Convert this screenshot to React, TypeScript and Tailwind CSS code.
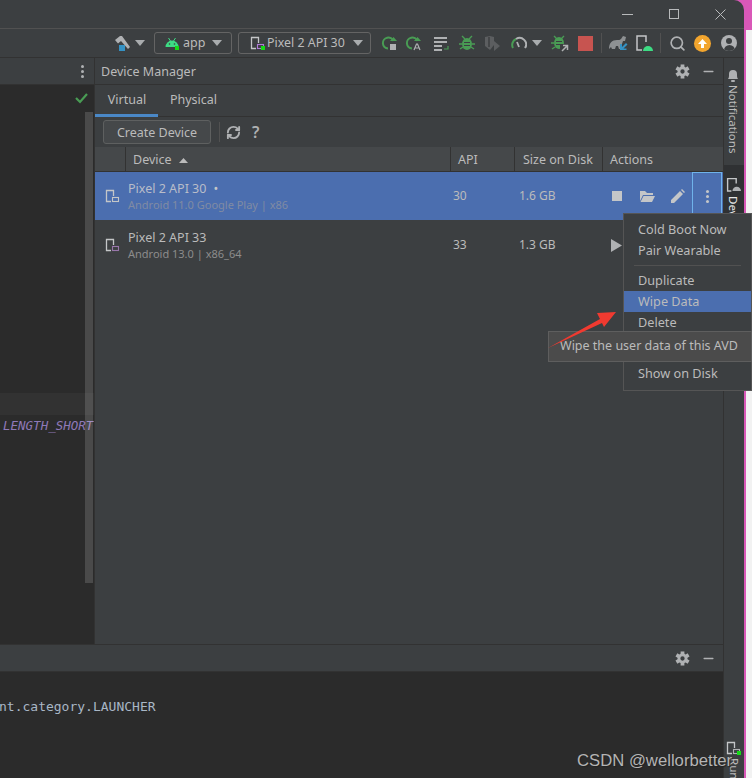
import React from "react";
import { Minus, Search, RefreshCw } from "lucide-react";

const UI = { fontFamily: '"Noto Sans", "Open Sans", sans-serif' };
const MONO = { fontFamily: '"DejaVu Sans Mono", "Liberation Mono", monospace' };

function Caret({ className = "" }: { className?: string }) {
  return (
    <svg width="10" height="6" viewBox="0 0 10 6" className={className}>
      <path d="M0 0h10L5 6z" fill="#a9acae" />
    </svg>
  );
}

function PhoneIcon({ accent = "#afb1b3", dot = false }: { accent?: string; dot?: boolean }) {
  return (
    <svg width="16" height="16" viewBox="0 0 16 16" fill="none" className="flex-none">
      <path d="M6 13.5H1.5V2.5h7V8" stroke="#c4c6c8" strokeWidth="1.3" />
      <rect x="7.5" y="9.5" width="6" height="4" stroke={accent} strokeWidth="1.1" />
      {dot && <rect x="11" y="11" width="4" height="4" fill="#16d916" />}
    </svg>
  );
}

function Android({ dot = false }: { dot?: boolean }) {
  return (
    <svg width="14" height="14" viewBox="0 0 14 14" className="flex-none">
      <path d="M0.5 11a6.500 6.500 0 0 1 13 0z" fill="#3ddc84" />
      <path d="M3.500 2l2 3M10.500 2l-2 3" stroke="#3ddc84" strokeWidth="1" />
      <circle cx="4.500" cy="8" r="0.8" fill="#3c3f41" />
      <circle cx="9.500" cy="8" r="0.8" fill="#3c3f41" />
      {dot && <rect x="10" y="10" width="4" height="4" fill="#16d916" />}
    </svg>
  );
}

function Gear() {
  const teeth = [0, 60, 120, 180, 240, 300];
  return (
    <svg width="15" height="15" viewBox="0 0 16 16" className="flex-none">
      {teeth.map((a) => (
        <rect key={a} x="6" y="0.5" width="4" height="4" fill="#afb1b3" transform={`rotate(${a} 8 8)`} />
      ))}
      <circle cx="8" cy="8" r="3.800" fill="none" stroke="#afb1b3" strokeWidth="3" />
    </svg>
  );
}

function PanelHeaderIcons() {
  return (
    <div className="flex items-center gap-[11px]">
      <Gear />
      <Minus size={15} color="#afb1b3" strokeWidth={2.2} />
    </div>
  );
}

function Toolbar() {
  return (
    <div className="h-[29px] flex items-center border-b border-[#323232] text-[#bbbbbb]">
      <div className="ml-[113px] w-[20px] flex justify-center">
        <svg width="18" height="18" viewBox="0 0 18 18">
          <path d="M1 6l5-4 2 0 8 11-2 2L7 7 4 9.500z" fill="#afb1b3" />
          <rect x="5" y="11" width="6" height="6" fill="#3592c4" />
        </svg>
      </div>
      <Caret className="ml-[2px]" />
      <div className="ml-[9px] w-[78px] h-[22px] rounded-[3px] border border-[#646464] flex items-center pl-[10px] gap-[4px] text-[12.500px]">
        <Android dot />
        <span>app</span>
        <Caret className="ml-[3px]" />
      </div>
      <div className="ml-[6px] w-[133px] h-[22px] rounded-[3px] border border-[#646464] flex items-center pl-[11px] gap-[1px] text-[12.400px]">
        <PhoneIcon accent="#b07cd8" dot />
        <span className="whitespace-nowrap">Pixel 2 API 30</span>
        <Caret className="ml-[7px]" />
      </div>
      <div className="ml-[8px] w-[20px] flex justify-center">
        <svg width="16" height="16" viewBox="0 0 16 16" fill="none">
          <path d="M7 13.5A5.5 5.5 0 1 1 12.5 6" stroke="#499c54" strokeWidth="2" />
          <path d="M9 6h7l-3.500-4z" fill="#499c54" />
          <rect x="9" y="9" width="6" height="6" fill="#afb1b3" />
        </svg>
      </div>
      <div className="ml-[4px] w-[20px] flex justify-center">
        <svg width="16" height="16" viewBox="0 0 16 16" fill="none">
          <path d="M7 13.500A5.500 5.500 0 1 1 12.500 6" stroke="#499c54" strokeWidth="2" />
          <path d="M9 6h7l-3.500-4z" fill="#499c54" />
          <path d="M9 15l2.500-6h1l2.500 6M10.500 13h3" stroke="#afb1b3" strokeWidth="1.2" />
        </svg>
      </div>
      <div className="ml-[8px] w-[20px] flex justify-center">
        <svg width="16" height="16" viewBox="0 0 16 16" fill="none">
          <path d="M1 3h13M1 7h13M1 11h8M1 15h8" stroke="#afb1b3" strokeWidth="1.8" />
          <path d="M15 11v3h-4" stroke="#499c54" strokeWidth="1.2" />
        </svg>
      </div>
      <div className="ml-[6px] w-[20px] flex justify-center">
        <svg width="16" height="16" viewBox="0 0 16 16" fill="none">
          <ellipse cx="8" cy="9" rx="5" ry="6" fill="#499c54" />
          <path d="M3 1l3 3M13 1l-3 3M0 9h3M13 9h3M1 14l3-2M15 14l-3-2" stroke="#499c54" strokeWidth="1.4" />
          <path d="M5 7.500h6M5 10.500h6" stroke="#3c3f41" strokeWidth="1.2" />
        </svg>
      </div>
      <div className="ml-[5px] w-[20px] flex justify-center">
        <svg width="16" height="16" viewBox="0 0 16 16">
          <path d="M1 2l5-1 4 1v8l-4 5-5-4z" fill="#5c5e60" />
          <path d="M10 6l6 5-6 5z" fill="#5c5e60" />
          <path d="M5 2v10" stroke="#3c3f41" strokeWidth="1.500" />
        </svg>
      </div>
      <div className="ml-[7px] w-[20px] flex justify-center">
        <svg width="16" height="16" viewBox="0 0 16 16" fill="none">
          <path d="M2 13A6.500 6.500 0 0 1 5 4" stroke="#499c54" strokeWidth="2" />
          <path d="M5 4A6.500 6.500 0 0 1 14 13" stroke="#afb1b3" strokeWidth="2" />
          <path d="M8 12L6 7" stroke="#afb1b3" strokeWidth="1.800" />
        </svg>
      </div>
      <Caret className="ml-[3px]" />
      <div className="ml-[8px] w-[20px] flex justify-center">
        <svg width="18" height="18" viewBox="0 0 18 18" fill="none">
          <ellipse cx="8" cy="9" rx="5" ry="6" fill="#499c54" />
          <path d="M3 2l3 3M13 2l-3 3M0 9h3M1 15l3-2" stroke="#499c54" strokeWidth="1.400" />
          <path d="M5 7.500h6M5 10.500h6" stroke="#3c3f41" strokeWidth="1.200" />
          <path d="M9 10h8v8H9z" fill="#3c3f41" />
          <path d="M11 17l5-5M12 11.500h4.500V16" stroke="#afb1b3" strokeWidth="1.500" />
        </svg>
      </div>
      <div className="ml-[5px] w-[20px] flex justify-center">
        <div className="w-[15px] h-[15px] bg-[#c75450]" />
      </div>
      <div className="ml-[6px] w-px h-[20px] bg-[#515151]" />
      <div className="ml-[6px] w-[20px] flex justify-center">
        <svg width="20" height="16" viewBox="0 0 20 16">
          <path d="M1 14c0-6 3-9 8-9 2 0 3 0 4-1l2-3 3 1-1 4h-2l-1 3v5h-3l-1-3-2 0-1 3H4l-1-2z" fill="#8e9193" />
          <path d="M12 15V9h2v3l4-4 1.500 1.500-4 4h3V15z" fill="#3592c4" />
        </svg>
      </div>
      <div className="ml-[6px] w-[20px] flex justify-center">
        <svg width="20" height="18" viewBox="0 0 20 18" fill="none">
          <path d="M8 16H3V2h9v6" stroke="#c4c6c8" strokeWidth="1.500" />
          <path d="M9 17a5 5 0 0 1 10 0z" fill="#3ddc84" />
        </svg>
      </div>
      <div className="ml-[6px] w-px h-[20px] bg-[#515151]" />
      <div className="ml-[7px] w-[18px] flex justify-center">
        <Search size={17} color="#afb1b3" strokeWidth={2.4} />
      </div>
      <div className="ml-[8px] w-[17px] h-[17px] rounded-full bg-[#f2a52e] flex items-center justify-center">
        <svg width="11" height="11" viewBox="0 0 11 11">
          <path d="M5.500 1L10 6H7v4H4V6H1z" fill="#ffffff" />
        </svg>
      </div>
      <div className="ml-[10px] w-[16px] h-[16px] rounded-full bg-[#afb1b3] relative overflow-hidden">
        <div className="mx-auto mt-[3px] w-[6px] h-[6px] rounded-full bg-[#3c3f41]" />
        <div className="mx-auto mt-[1px] w-[11px] h-[6px] rounded-t-full bg-[#3c3f41]" />
      </div>
    </div>
  );
}

function DeviceRow({
  selected,
  name,
  sub,
  api,
  size,
  children,
}: {
  selected?: boolean;
  name: React.ReactNode;
  sub: string;
  api: string;
  size: string;
  children: React.ReactNode;
}) {
  return (
    <div className={`h-[48px] flex items-center text-[12px] ${selected ? "bg-[#4b6eaf]" : ""}`}>
      <div className="w-[33px] pl-[10px] flex-none">
        <PhoneIcon accent={selected ? "#c4c6c8" : "#9876aa"} />
      </div>
      <div className="w-[325px] flex-none">
        <div className={`text-[12.500px] leading-[17px] ${selected ? "text-[#b9bdc9]" : "text-[#bbbbbb]"}`}>{name}</div>
        <div className={`text-[11px] leading-[16px] ${selected ? "text-[#808ba3]" : "text-[#8c8c8c]"}`}>{sub}</div>
      </div>
      <div className="w-[66px] flex-none text-[#bbbbbb]">{api}</div>
      <div className="w-[83px] flex-none text-[#bbbbbb]">{size}</div>
      <div className="flex-1 flex items-center h-full">{children}</div>
    </div>
  );
}

function MenuItem({ children, active }: { children: React.ReactNode; active?: boolean }) {
  return (
    <div className={`h-[21px] pl-[14px] flex items-center text-[12.700px] text-[#bbbbbb] ${active ? "bg-[#4b6eaf]" : ""}`}>
      {children}
    </div>
  );
}

function VerticalTabs() {
  return (
    <div className="w-[21px] flex-none border-l border-[#323232] flex flex-col items-center text-[11.500px] text-[#bbbbbb]">
      <div className="w-full h-[107px] flex flex-col items-center pt-[11px] pr-[2px]">
        <svg width="14" height="14" viewBox="0 0 14 14" className="flex-none">
          <path d="M2 10c1-1 1-3 1-5a4 4 0 0 1 8 0c0 2 0 4 1 5z" fill="#afb1b3" />
          <rect x="5" y="11" width="4" height="2" rx="1" fill="#afb1b3" />
        </svg>
        <span className="[writing-mode:vertical-rl] leading-[18px] whitespace-nowrap mt-[2px]">Notifications</span>
      </div>
      <div className="w-full h-[130px] bg-[#2f3133] flex flex-col items-center pt-[12px] pr-[2px] overflow-hidden">
        <svg width="15" height="15" viewBox="0 0 14 14" fill="none" className="flex-none">
          <path d="M5 13H1.500V1.500h8V6" stroke="#c4c6c8" strokeWidth="1.300" />
          <path d="M6 13a4 4 0 0 1 8 0z" fill="#afb1b3" />
        </svg>
        <span className="[writing-mode:vertical-rl] leading-[18px] whitespace-nowrap mt-[4px] text-[#e6e6e6]">Device Manager</span>
      </div>
      <div className="flex-1" />
      <div className="w-full h-[38px] flex-none flex flex-col items-center overflow-hidden pr-[1px]">
        <PhoneIcon accent="#afb1b3" dot />
        <span className="[writing-mode:vertical-rl] leading-[18px] whitespace-nowrap mt-[2px]">Run</span>
      </div>
    </div>
  );
}

export default function App() {
  return (
    <div className="relative w-[752px] h-[778px] flex overflow-hidden bg-[#d958b8]" style={UI}>
      <div className="w-[744px] h-full flex flex-col bg-[#3c3f41] rounded-tr-[10px] overflow-hidden">
        <div className="h-[29px] flex-none border-b border-[#515151] flex items-center justify-end">
          <div className="w-[46px] flex justify-center">
            <div className="w-[11px] h-px bg-[#b8babb]" />
          </div>
          <div className="w-[47px] flex justify-center">
            <div className="w-[10px] h-[10px] border border-[#b8babb]" />
          </div>
          <div className="w-[46px] flex justify-center mr-[1px]">
            <svg width="11" height="11" viewBox="0 0 11 11">
              <path d="M.5.500l10 10M10.500.500l-10 10" stroke="#b8babb" strokeWidth="1" />
            </svg>
          </div>
        </div>
        <Toolbar />
        <div className="flex-1 flex min-h-0">
          <div className="flex-1 flex flex-col min-w-0">
            <div className="flex-1 flex min-h-0 border-b border-[#323232]">
              <div className="w-[95px] flex-none flex flex-col border-r border-[#323232]">
                <div className="h-[27px] flex-none flex items-center justify-end pr-[10px] border-b border-[#323232]">
                  <div className="flex flex-col gap-[2px]">
                    <div className="w-[3px] h-[3px] rounded-full bg-[#afb1b3]" />
                    <div className="w-[3px] h-[3px] rounded-full bg-[#afb1b3]" />
                    <div className="w-[3px] h-[3px] rounded-full bg-[#afb1b3]" />
                  </div>
                </div>
                <div className="flex-1 bg-[#2b2b2b] relative min-h-0 overflow-hidden">
                  <div className="h-[308px]" />
                  <div className="h-[22px] bg-[#323232]" />
                  <div className="h-[22px] pl-[3px] flex items-center whitespace-nowrap italic text-[12.500px] text-[#8f79b8]" style={MONO}>
                    LENGTH_SHORT
                  </div>
                  <svg width="13" height="13" viewBox="0 0 13 13" className="absolute left-[75px] top-[6px]">
                    <path d="M1 7l4 4 7-8" stroke="#499c54" strokeWidth="2.200" fill="none" />
                  </svg>
                  <div className="absolute left-[85px] top-[27px] w-[8px] h-[471px] bg-white/15" />
                </div>
              </div>
              <div className="flex-1 flex flex-col min-w-0">
                <div className="h-[27px] flex-none pl-[6px] pr-[7px] flex items-center justify-between border-b border-[#323232] text-[12.500px] text-[#bbbbbb]">
                  <span className="pt-[2px]">Device Manager</span>
                  <PanelHeaderIcons />
                </div>
                <div className="h-[32px] flex-none flex border-b border-[#323232] text-[12.500px] text-[#bbbbbb]">
                  <div className="w-[63px] flex justify-center items-center border-b-[3px] border-[#4a88c7] h-[32px] pt-[2px] pl-[1px]">Virtual</div>
                  <div className="w-[70px] flex justify-center items-center h-[29px] pt-[2px] pl-[1px]">Physical</div>
                </div>
                <div className="h-[30px] flex-none flex items-center pl-[8px]">
                  <div className="w-[108px] h-[24px] pt-[2px] rounded-[3px] border border-[#5e6060] bg-[#45484a] flex items-center justify-center text-[12.500px] text-[#bbbbbb]">
                    Create Device
                  </div>
                  <div className="ml-[8px] w-px h-[20px] bg-[#515151]" />
                  <div className="ml-[6px]">
                    <RefreshCw size={15} color="#afb1b3" strokeWidth={3} />
                  </div>
                  <span className="ml-[11px] text-[16px] font-semibold text-[#afb1b3] leading-none">?</span>
                </div>
                <div className="h-[25px] flex-none flex items-center bg-[#45484a] border-b border-[#323232] text-[12.500px] text-[#bbbbbb]">
                  <div className="w-[31px] h-full border-r border-[#323232]" />
                  <div className="w-[325px] h-full border-r border-[#323232] pl-[7px] pt-[2px] flex items-center gap-[7px]">
                    Device
                    <svg width="9" height="5" viewBox="0 0 9 5">
                      <path d="M0 5h9L4.500 0z" fill="#bbbbbb" />
                    </svg>
                  </div>
                  <div className="w-[64px] h-full border-r border-[#323232] pl-[7px] pt-[2px] flex items-center">API</div>
                  <div className="w-[88px] h-full border-r border-[#323232] pl-[8px] pt-[2px] flex items-center">Size on Disk</div>
                  <div className="pl-[7px] pt-[2px]">Actions</div>
                </div>
                <DeviceRow
                  selected
                  name={
                    <span>
                      Pixel 2 API 30<span className="ml-[7px] text-[#c4c6c8]">•</span>
                    </span>
                  }
                  sub="Android 11.0 Google Play | x86"
                  api="30"
                  size="1.6 GB"
                >
                  <div className="w-[10px]" />
                  <div className="w-[10px] h-[10px] bg-[#c4c6c8]" />
                  <svg width="15" height="13" viewBox="0 0 15 13" className="ml-[18px]">
                    <path d="M0 1h5l2 2h6v2H3L0 11zM3.500 6H15l-3 6H0.500z" fill="#c4c6c8" />
                  </svg>
                  <svg width="15" height="15" viewBox="0 0 15 15" className="ml-[15px]">
                    <path d="M1 11L10 2l3 3-9 9H1zM11 1l1-1 3 3-1 1z" fill="#c4c6c8" />
                  </svg>
                  <div className="ml-[7px] w-[30px] h-full border border-[#6fb3ea] flex flex-col items-center justify-center gap-[2px]">
                    <div className="w-[3px] h-[3px] rounded-full bg-[#c4c6c8]" />
                    <div className="w-[3px] h-[3px] rounded-full bg-[#c4c6c8]" />
                    <div className="w-[3px] h-[3px] rounded-full bg-[#c4c6c8]" />
                  </div>
                </DeviceRow>
                <div className="h-px flex-none" />
                <DeviceRow
                  name="Pixel 2 API 33"
                  sub="Android 13.0 | x86_64"
                  api="33"
                  size="1.3 GB"
                >
                  <svg width="11" height="13" viewBox="0 0 11 13" className="ml-[9px]">
                    <path d="M0 0l11 6.500L0 13z" fill="#afb1b3" />
                  </svg>
                </DeviceRow>
                <div className="flex-1" />
              </div>
            </div>
            <div className="h-[27px] flex-none flex items-center justify-end pr-[7px] border-b border-[#323232]">
              <PanelHeaderIcons />
            </div>
            <div className="h-[106px] flex-none bg-[#2b2b2b] pt-[27px] overflow-hidden">
              <div className="whitespace-nowrap text-[13px] leading-[16px] text-[#a9b7c6] -ml-[1px]" style={MONO}>
                nt.category.LAUNCHER
              </div>
            </div>
          </div>
          <VerticalTabs />
        </div>
      </div>
      <div className="w-[8px] h-full flex flex-col">
        <div className="h-[30px] flex-none bg-[#d958b8]" />
        <div className="flex-1 ml-[2px] bg-[#f2f2f2]" />
      </div>

      {/* context menu */}
      <div className="absolute left-[623px] top-[213px] w-[129px] h-[178px] bg-[#3c3f41] border border-[#555555] pt-[5px]">
        <MenuItem>Cold Boot Now</MenuItem>
        <MenuItem>Pair Wearable</MenuItem>
        <div className="mx-[10px] my-[4px] h-px bg-[#515151]" />
        <MenuItem>Duplicate</MenuItem>
        <MenuItem active>Wipe Data</MenuItem>
        <MenuItem>Delete</MenuItem>
        <div className="h-[30px]" />
        <MenuItem>Show on Disk</MenuItem>
      </div>
      {/* tooltip */}
      <div className="absolute left-[548px] top-[331px] w-[204px] h-[31px] bg-[#4b4b4b] border border-[#5e5e5e] pl-[11px] flex items-center text-[12.500px] text-[#bbbbbb] whitespace-nowrap">
        Wipe the user data of this AVD
      </div>
      {/* annotation arrow */}
      <svg width="752" height="778" viewBox="0 0 752 778" className="absolute inset-0 pointer-events-none">
        <path d="M548 348L600 319L597 313L616 312L604 327L602 323Z" fill="#f03a30" />
      </svg>
      {/* watermark */}
      <div
        className="absolute left-[577px] top-[751px] text-[16.700px] leading-[20px] text-[#b4b4b4] whitespace-nowrap [text-shadow:1px_1px_1px_#222]"
        style={{ fontFamily: '"Liberation Sans", Arial, sans-serif' }}
      >
        CSDN @wellorbetter
      </div>
    </div>
  );
}
